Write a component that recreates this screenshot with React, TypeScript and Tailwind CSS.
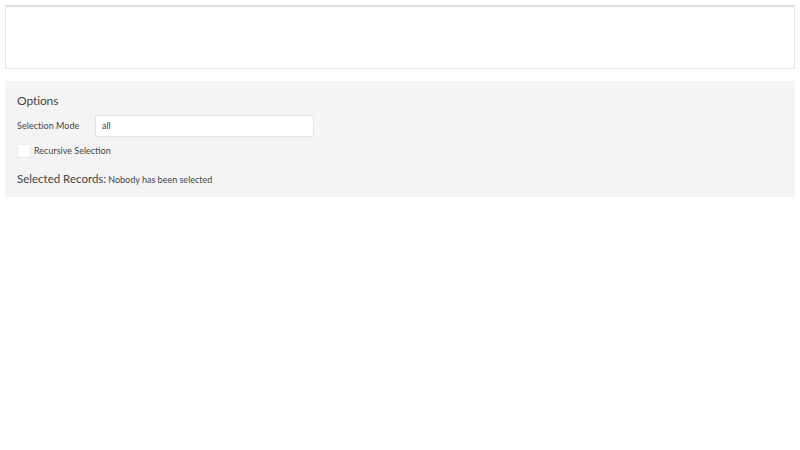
import React from "react";

export default function App() {
  return (
    <div className="w-[800px] h-[450px] bg-white p-[5px] text-[#444]" style={{ fontFamily: "Lato, 'Open Sans', sans-serif" }}>
      <div className="h-[64px] border border-[#e3e3e3] border-t-2 border-t-[#dcdcdc] bg-white" />
      <div className="mt-[12px] bg-[#f4f4f4] pl-[12px] pt-[12px] h-[116px]">
        <div className="text-[12px] leading-[16px] tracking-[-0.1px] text-[#444]">Options</div>
        <div className="mt-[6px] flex items-center h-[22px]">
          <span className="w-[78px] text-[9px] leading-[12px] tracking-[0.05px] text-[#444]">Selection Mode</span>
          <div className="w-[219px] h-[22px] bg-white border border-[#e2e2e2] rounded-[2px] flex items-center pl-[6px] text-[9px] text-[#444]">all</div>
        </div>
        <div className="mt-[7px] flex items-center">
          <div className="w-[14px] h-[14px] bg-white border border-[#ebebeb]" />
          <span className="ml-[3px] text-[9px] leading-[12px] text-[#444]">Recursive Selection</span>
        </div>
        <div className="mt-[13px] flex items-baseline h-[16px]">
          <span className="text-[11.5px] leading-[16px] text-[#444]">Selected Records:</span>
          <span className="ml-[2px] text-[9px] leading-[12px] text-[#444]">Nobody has been selected</span>
        </div>
      </div>
    </div>
  );
}
